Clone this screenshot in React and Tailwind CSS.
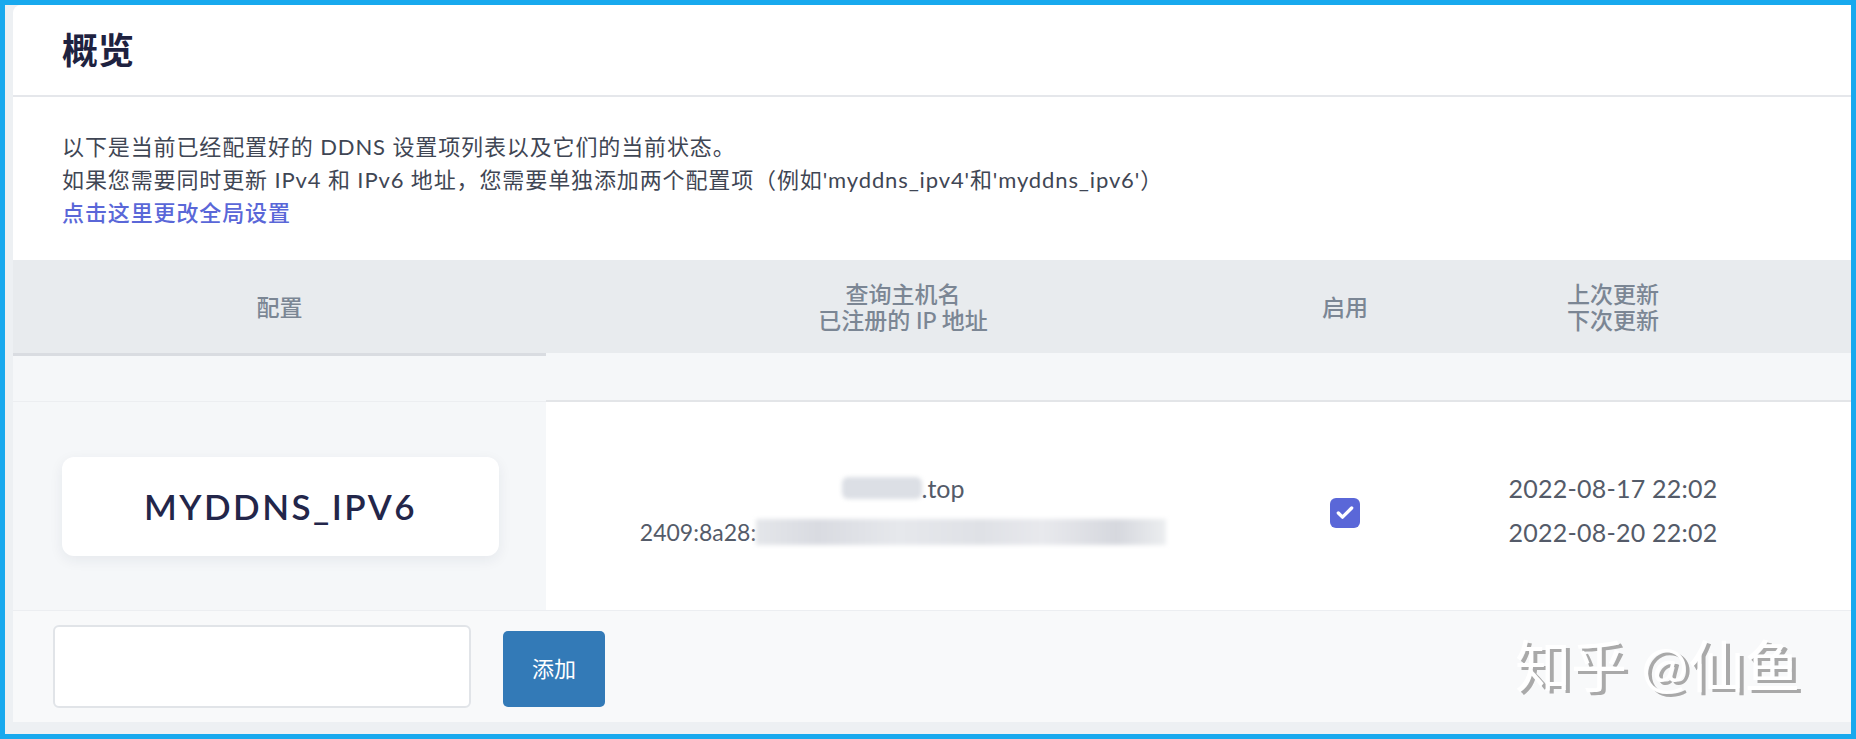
import { Check } from "lucide-react";

const sans = "font-['Lato','Noto_Sans_CJK_SC',sans-serif]";

function Blur({ w, h, className = "" }) {
  return <span className={`inline-block align-middle blur-[2px] ${className}`} style={{ width: w, height: h }} />;
}

export default function App() {
  return (
    <div className={`relative h-[739px] w-[1856px] overflow-hidden border-[5px] border-[#18a9ee] bg-[#edf0f3] ${sans}`}>
      <div className="ml-[8px] flex h-[717px] flex-col overflow-hidden rounded-tl-lg bg-white">
        <div className="flex h-[92px] shrink-0 items-center border-b-2 border-[#e5e7eb] pl-[49px]">
          <h1 className="text-[36px] font-bold text-[#1e2240]">概览</h1>
        </div>

        <div className="pl-[49px] pt-[33px] text-[22px] leading-[33px] tracking-[0.04em] text-[#3f4654]">
          <p>以下是当前已经配置好的 DDNS 设置项列表以及它们的当前状态。</p>
          <p>如果您需要同时更新 IPv4 和 IPv6 地址，您需要单独添加两个配置项（例如'myddns_ipv4'和'myddns_ipv6'）</p>
          <a className="font-medium text-[#5a67d8]">点击这里更改全局设置</a>
        </div>

        <div className="mt-[31px] flex h-[93px] shrink-0 items-center bg-[#e8ebee] text-center text-[23px] font-medium leading-[26px] text-[#7b8694]">
          <div className="w-[533px]">配置</div>
          <div className="w-[714px]">
            <div>查询主机名</div>
            <div>已注册的 IP 地址</div>
          </div>
          <div className="w-[170px]">启用</div>
          <div className="w-[366px]">
            <div>上次更新</div>
            <div>下次更新</div>
          </div>
        </div>

        <div className="flex h-[49px] shrink-0 bg-[#f5f7f9]">
          <div className="w-[533px] border-t-[3px] border-b border-t-[#d9dce1] border-b-[#eceef1]" />
          <div className="flex-1 border-b-2 border-[#e3e5e8]" />
        </div>

        <div className="flex h-[208px] shrink-0">
          <div className="flex w-[533px] items-center bg-[#f5f7f9] pl-[49px]">
            <div className="flex h-[99px] w-[437px] items-center justify-center rounded-xl bg-white shadow-[0_4px_14px_rgba(30,40,70,0.07)]">
              <span className="text-[35px] font-semibold tracking-[0.07em] text-[#23264a]">MYDDNS_IPV6</span>
            </div>
          </div>
          <div className="flex flex-1 items-center bg-white pt-[8px] text-[#545b69]">
            <div className="flex w-[714px] flex-col items-center gap-[16px] text-[23px] leading-[28px]">
              <div className="flex items-center">
                <Blur w={80} h={22} className="rounded-md bg-[#dcdfe5]" />
                <span className="text-[25px]">.top</span>
              </div>
              <div className="flex items-center">
                <span>2409:8a28:</span>
                <Blur w={410} h={26} className="bg-[linear-gradient(90deg,#e4e6ea,#d9dbe1_15%,#e6e8ec_35%,#dfe1e6_55%,#e8e9ed_70%,#d6d8de_88%,#eceef0)]" />
              </div>
            </div>
            <div className="flex w-[170px] justify-center pt-[6px]">
              <span className="flex h-[30px] w-[30px] items-center justify-center rounded-md bg-[#5a67d8]">
                <Check size={20} strokeWidth={4} className="text-white" />
              </span>
            </div>
            <div className="flex w-[366px] flex-col items-center gap-[16px] text-[25px] leading-[28px] tracking-[0.01em]">
              <div>2022-08-17 22:02</div>
              <div>2022-08-20 22:02</div>
            </div>
          </div>
        </div>

        <div className="flex flex-1 items-center border-t border-[#eceef1] bg-[#f8f9fa] pl-[40px]">
          <input className="h-[83px] w-[418px] rounded-md border-2 border-[#e1e4e8] bg-white outline-none" />
          <button className="ml-[32px] mt-[4px] h-[76px] w-[102px] rounded-[5px] bg-[#337ab7] text-[22px] text-white">添加</button>
        </div>
      </div>

      <div className="absolute left-[1510px] top-[626px] text-[56px] leading-[70px] text-white [text-shadow:4px_3px_0_#a9a9a9]">
        知乎 @仙鱼
      </div>
    </div>
  );
}
